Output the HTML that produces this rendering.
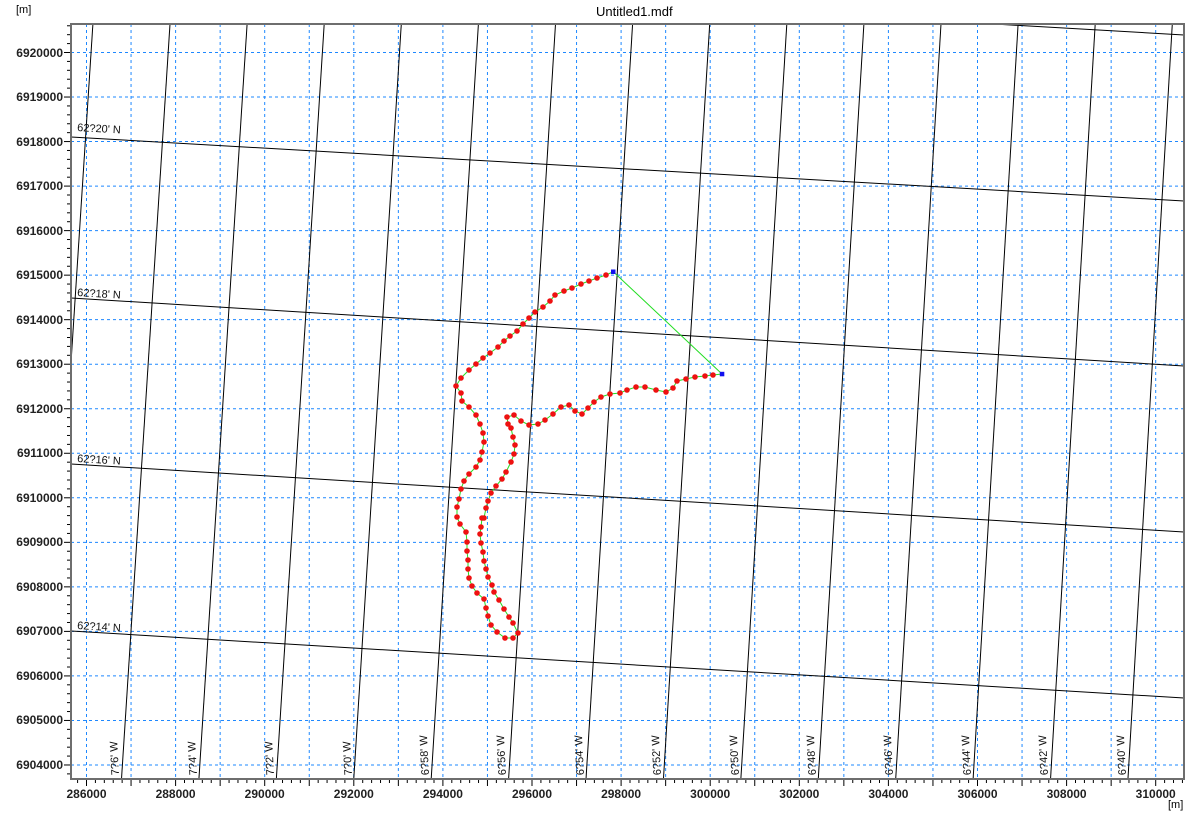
<!DOCTYPE html>
<html><head><meta charset="utf-8"><style>
html,body{margin:0;padding:0;background:#fff;width:1192px;height:814px;overflow:hidden}
svg{display:block;font-family:"Liberation Sans",Arial,sans-serif}
</style></head><body>
<svg id="s" width="1192" height="814" viewBox="0 0 1192 814" xmlns="http://www.w3.org/2000/svg">
<defs><clipPath id="c"><rect x="71" y="24" width="1113" height="755"/></clipPath></defs>
<rect x="0" y="0" width="1192" height="814" fill="#fff"/>
<g id="grid" clip-path="url(#c)"></g>
<g id="geo" clip-path="url(#c)" stroke="#000" stroke-width="1" fill="none">
<line x1="71" y1="137" x2="1184" y2="201"/>
<line x1="71" y1="298" x2="1184" y2="366"/>
<line x1="71" y1="464" x2="1184" y2="532"/>
<line x1="71" y1="631" x2="1184" y2="698"/>
<line x1="994" y1="24" x2="1184" y2="35"/>
</g>
<g id="track" clip-path="url(#c)"></g>
<rect x="71" y="24" width="1113" height="755" fill="none" stroke="#6e6e6e" stroke-width="2"/>
<g id="ticks" stroke="#000" stroke-width="1"></g>
<g font-size="12" fill="#000">
<text x="596" y="16" font-size="13">Untitled1.mdf</text>
<text x="16" y="13" font-size="11">[m]</text>
<text x="1168" y="808" font-size="11">[m]</text>
</g>
<g font-size="12" font-weight="bold" fill="#222" text-anchor="end">
<text x="63" y="57">6920000</text><text x="63" y="101">6919000</text><text x="63" y="146">6918000</text><text x="63" y="190">6917000</text><text x="63" y="235">6916000</text><text x="63" y="279">6915000</text><text x="63" y="324">6914000</text><text x="63" y="368">6913000</text><text x="63" y="413">6912000</text><text x="63" y="457">6911000</text><text x="63" y="502">6910000</text><text x="63" y="546">6909000</text><text x="63" y="591">6908000</text><text x="63" y="635">6907000</text><text x="63" y="680">6906000</text><text x="63" y="724">6905000</text><text x="63" y="769">6904000</text>
</g>
<g font-size="12" font-weight="bold" fill="#222" text-anchor="middle">
<text x="86.5" y="798">286000</text><text x="175.6" y="798">288000</text><text x="264.7" y="798">290000</text><text x="353.8" y="798">292000</text><text x="442.9" y="798">294000</text><text x="532" y="798">296000</text><text x="621.1" y="798">298000</text><text x="710.2" y="798">300000</text><text x="799.3" y="798">302000</text><text x="888.4" y="798">304000</text><text x="977.5" y="798">306000</text><text x="1066.6" y="798">308000</text><text x="1155.7" y="798">310000</text>
</g>
<g font-size="11" fill="#111">
<text transform="translate(77,131) rotate(3.3)">62?20' N</text>
<text transform="translate(77,296) rotate(3.5)">62?18' N</text>
<text transform="translate(77,462) rotate(3.5)">62?16' N</text>
<text transform="translate(77,629) rotate(3.5)">62?14' N</text>
</g>
<g font-size="11" fill="#111">
<text transform="translate(119,775) rotate(-93)">7?6' W</text>
<text transform="translate(197,775) rotate(-93)">7?4' W</text>
<text transform="translate(274,775) rotate(-93)">7?2' W</text>
<text transform="translate(352,775) rotate(-93)">7?0' W</text>
<text transform="translate(429,775) rotate(-93)">6?58' W</text>
<text transform="translate(506,775) rotate(-93)">6?56' W</text>
<text transform="translate(584,775) rotate(-93)">6?54' W</text>
<text transform="translate(661,775) rotate(-93)">6?52' W</text>
<text transform="translate(739,775) rotate(-93)">6?50' W</text>
<text transform="translate(816,775) rotate(-93)">6?48' W</text>
<text transform="translate(893,775) rotate(-93)">6?46' W</text>
<text transform="translate(971,775) rotate(-93)">6?44' W</text>
<text transform="translate(1048,775) rotate(-93)">6?42' W</text>
<text transform="translate(1126,775) rotate(-93)">6?40' W</text>
</g>
</svg>
<script>
var NS="http://www.w3.org/2000/svg";
function el(p,t,a){var e=document.createElementNS(NS,t);for(var k in a)e.setAttribute(k,a[k]);p.appendChild(e);return e;}
var g=document.getElementById('grid'),geo=document.getElementById('geo'),tk=document.getElementById('ticks'),tr=document.getElementById('track');
for(var k=0;k<=24;k++){var x=86.5+44.55*k;el(g,'line',{x1:x,y1:24,x2:x,y2:779,stroke:'#1e88ff','stroke-width':1,'stroke-dasharray':'3,3'});}
for(var j=0;j<=16;j++){var y=52.5+44.53*j;el(g,'line',{x1:71,y1:y,x2:1184,y2:y,stroke:'#1e88ff','stroke-width':1,'stroke-dasharray':'3,3'});}
for(var i=-1;i<=14;i++){el(geo,'line',{x1:170+77.1*i,y1:24,x2:121.5+77.42*i,y2:779});}
for(var m=-3;m<=130;m++){var x=86.5+8.91*m;if(x<72||x>1183)continue;var L=(m%5==0)?6:3;el(tk,'line',{x1:x,y1:780,x2:x,y2:780+L});}
for(var m=-3;m<=85;m++){var y=52.5+8.906*m;if(y<25||y>778)continue;var L=(m%5==0)?6:3;el(tk,'line',{x1:70-L,y1:y,x2:70,y2:y});}
var P=[[606,275],[597,278],[589,281],[581,284],[572,288],[564,291],[555,295],[550,301],[543,307],[535,312],[529,318],[523,324],[517,331],[510,336],[504,341],[498,347],[490,353],[483,358],[476,364],[469,370],[461,378],[456,386],[461,393],[462,401],[469,407],[476,415],[480,424],[483,433],[484,442],[482,452],[480,460],[476,467],[469,474],[464,481],[461,489],[459,499],[457,507],[457,517],[460,524],[466,532],[467,542],[467,551],[468,560],[468,569],[469,578],[472,586],[477,593],[484,599],[486,608],[488,616],[491,625],[497,632],[505,638],[513,638],[518,633],[513,623],[509,617],[504,609],[499,600],[494,592],[492,585],[488,577],[486,569],[484,561],[483,552],[481,543],[480,534],[481,527],[482,518],[484,518],[486,508],[488,501],[491,493],[496,486],[502,479],[506,472],[511,462],[514,454],[515,445],[513,437],[511,428],[508,424],[507,417],[514,415],[521,421],[529,425],[538,424],[545,420],[553,414],[561,407],[569,405],[575,411],[582,414],[588,408],[594,402],[601,397],[610,394],[620,393],[627,390],[636,387],[645,387],[656,390],[666,392],[673,388],[677,381],[686,379],[695,377],[705,376],[713,375]];
var pts=[[613.3,271.7]].concat(P).concat([[722,374]]);
el(tr,'polyline',{points:pts.map(function(p){return p.join(',')}).join(' '),fill:'none',stroke:'#22dd22','stroke-width':1});
el(tr,'line',{x1:613.3,y1:271.7,x2:722,y2:374,stroke:'#22dd22','stroke-width':1});
P.forEach(function(p){el(tr,'circle',{cx:p[0],cy:p[1],r:2.8,fill:'#ee1111'});});
el(tr,'rect',{x:611,y:269.5,width:4.5,height:4.5,fill:'#1010ee'});
el(tr,'rect',{x:719.8,y:371.8,width:4.5,height:4.5,fill:'#1010ee'});
</script>
</body></html>
